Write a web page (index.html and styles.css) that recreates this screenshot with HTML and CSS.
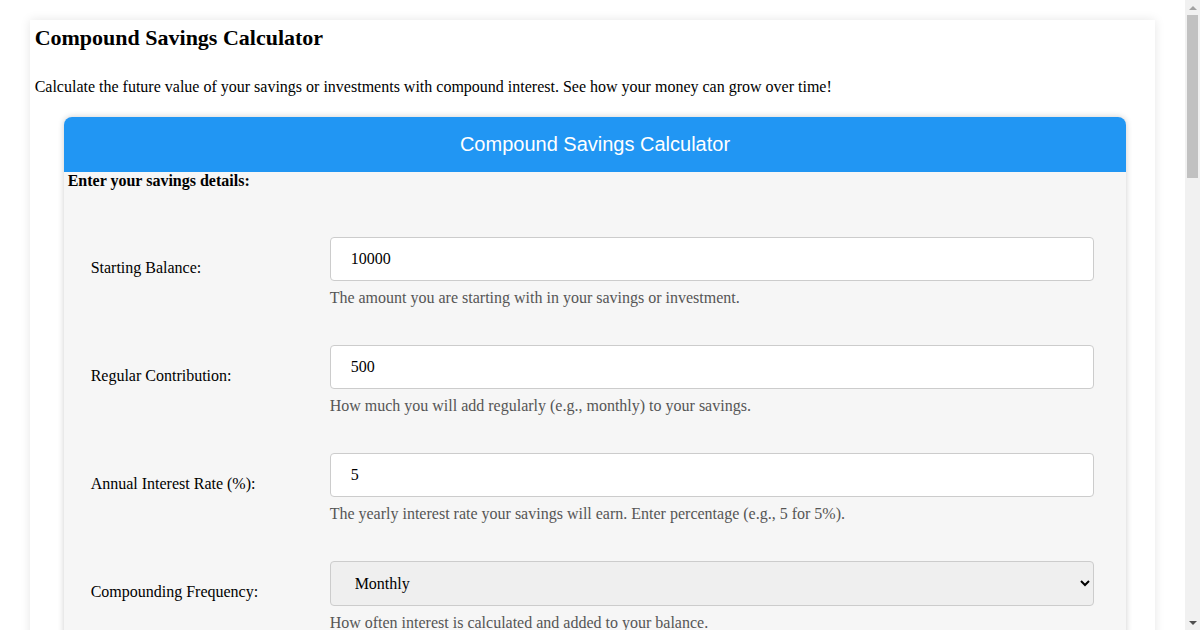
FILE: index.html
```html
<!DOCTYPE html>
<html lang="en">
<head>
<meta charset="utf-8">
<title>Compound Savings Calculator</title>
<link rel="stylesheet" href="styles.css">
</head>
<body>
<div class="viewport">
<div class="page">
  <h2 class="page-title">Compound Savings Calculator</h2>
  <p class="intro">Calculate the future value of your savings or investments with compound interest. See how your money can grow over time!</p>

  <div class="calc">
    <div class="calc-header">Compound Savings Calculator</div>
    <div class="calc-body">
      <div class="section-title">Enter your savings details:</div>

      <div class="fields">
        <div class="field">
          <label class="field-label" for="start">Starting Balance:</label>
          <div class="field-control">
            <input id="start" class="text-input" type="text" value="10000">
            <div class="help">The amount you are starting with in your savings or investment.</div>
          </div>
        </div>

        <div class="field">
          <label class="field-label" for="contrib">Regular Contribution:</label>
          <div class="field-control">
            <input id="contrib" class="text-input" type="text" value="500">
            <div class="help">How much you will add regularly (e.g., monthly) to your savings.</div>
          </div>
        </div>

        <div class="field">
          <label class="field-label" for="rate">Annual Interest Rate (%):</label>
          <div class="field-control">
            <input id="rate" class="text-input" type="text" value="5">
            <div class="help">The yearly interest rate your savings will earn. Enter percentage (e.g., 5 for 5%).</div>
          </div>
        </div>

        <div class="field">
          <label class="field-label" for="freq">Compounding Frequency:</label>
          <div class="field-control">
            <select id="freq" class="select-input">
              <option>Monthly</option>
              <option>Quarterly</option>
              <option>Annually</option>
              <option>Daily</option>
            </select>
            <div class="help">How often interest is calculated and added to your balance.</div>
          </div>
        </div>

        <div class="field">
          <label class="field-label" for="cfreq">Contribution Frequency:</label>
          <div class="field-control">
            <select id="cfreq" class="select-input">
              <option>Monthly</option>
              <option>Quarterly</option>
              <option>Annually</option>
            </select>
            <div class="help">How often you will make your regular contribution.</div>
          </div>
        </div>

        <div class="field">
          <label class="field-label" for="years">Number of Years:</label>
          <div class="field-control">
            <input id="years" class="text-input" type="text" value="10">
            <div class="help">How many years you plan to save or invest.</div>
          </div>
        </div>
      </div>

      <div class="actions">
        <button class="calc-btn" type="button">Calculate</button>
      </div>

      <div class="results">
        <div class="section-title">Results:</div>
        <div class="result-row"><span>Future Value:</span><strong>$94,111.19</strong></div>
        <div class="result-row"><span>Total Contributions:</span><strong>$70,000.00</strong></div>
        <div class="result-row"><span>Total Interest Earned:</span><strong>$24,111.19</strong></div>
      </div>

      <div class="results">
        <div class="section-title">Year-by-Year Breakdown:</div>
        <table class="breakdown">
          <thead><tr><th>Year</th><th>Contributions</th><th>Interest</th><th>Balance</th></tr></thead>
          <tbody>
            <tr><td>1</td><td>$16,000.00</td><td>$651.16</td><td>$16,651.16</td></tr>
            <tr><td>2</td><td>$22,000.00</td><td>$1,644.09</td><td>$23,644.09</td></tr>
            <tr><td>3</td><td>$28,000.00</td><td>$2,994.62</td><td>$30,994.62</td></tr>
            <tr><td>4</td><td>$34,000.00</td><td>$4,719.18</td><td>$38,719.18</td></tr>
            <tr><td>5</td><td>$40,000.00</td><td>$6,835.09</td><td>$46,835.09</td></tr>
            <tr><td>6</td><td>$46,000.00</td><td>$9,360.26</td><td>$55,360.26</td></tr>
            <tr><td>7</td><td>$52,000.00</td><td>$12,313.55</td><td>$64,313.55</td></tr>
            <tr><td>8</td><td>$58,000.00</td><td>$15,714.61</td><td>$73,714.61</td></tr>
            <tr><td>9</td><td>$64,000.00</td><td>$19,584.10</td><td>$83,584.10</td></tr>
            <tr><td>10</td><td>$70,000.00</td><td>$24,111.19</td><td>$94,111.19</td></tr>
          </tbody>
        </table>
      </div>
    </div>
  </div>

  <h3 class="sub-title">How Compound Interest Works</h3>
  <p class="info">Compound interest is interest calculated on the initial principal and also on the accumulated interest of previous periods. The more often interest is compounded, the faster your savings grow.</p>
  <p class="info">Regular contributions add to your principal, which in turn earns interest, helping your balance grow even faster over time.</p>

  <h3 class="sub-title">Tips for Growing Your Savings</h3>
  <ul class="tips">
    <li>Start saving as early as possible to give compound interest more time to work.</li>
    <li>Make regular contributions, even if they are small.</li>
    <li>Look for accounts with higher interest rates and more frequent compounding.</li>
    <li>Reinvest your interest earnings instead of withdrawing them.</li>
    <li>Review your savings plan regularly and increase contributions when you can.</li>
  </ul>

  <h3 class="sub-title">Frequently Asked Questions</h3>
  <p class="info"><strong>What is the difference between simple and compound interest?</strong><br>Simple interest is earned only on the principal, while compound interest is earned on both the principal and the interest already added.</p>
  <p class="info"><strong>Does compounding frequency matter?</strong><br>Yes. The more often interest is compounded, the more your savings will grow, although the difference becomes smaller at higher frequencies.</p>
  <p class="info"><strong>Are the results guaranteed?</strong><br>No. This calculator provides estimates only. Actual returns may vary depending on rates, fees and taxes.</p>
</div>
</div>
<div class="scrollbar" aria-hidden="true">
  <div class="sb-arrow sb-up"></div>
  <div class="sb-track"><div class="sb-thumb"></div></div>
  <div class="sb-arrow sb-down"></div>
</div>
</body>
</html>
```

FILE: styles.css
```css
html {
  height: 100%;
  overflow: hidden;
}

body {
  margin: 0;
  height: 100%;
  display: flex;
  overflow: hidden;
  font-family: "Liberation Serif", "Times New Roman", serif;
  font-size: 16px;
  color: #000;
  background: #fff;
}

.viewport {
  flex: 1;
  min-width: 0;
  overflow-y: auto;
  scrollbar-width: none;
}

.scrollbar {
  width: 15px;
  flex: none;
  display: flex;
  flex-direction: column;
  background: #f1f1f1;
}

.sb-arrow {
  height: 15px;
  flex: none;
  display: flex;
  align-items: center;
  justify-content: center;
}

.sb-up::before,
.sb-down::before {
  content: "";
  width: 0;
  height: 0;
  border-left: 4px solid transparent;
  border-right: 4px solid transparent;
}

.sb-up::before {
  border-bottom: 4px solid #a3a3a3;
}

.sb-down::before {
  border-top: 4px solid #505050;
}

.sb-track {
  flex: 1;
  padding: 0 2px;
}

.sb-thumb {
  height: 163px;
  background: #c1c1c1;
}

.page {
  width: 95%;
  margin: 20px auto;
  padding: 5px 5px 20px;
  box-sizing: border-box;
  background: #fff;
  box-shadow: 0 0 10px rgba(0, 0, 0, 0.1);
}

.page-title {
  font-size: 22px;
  margin: 0 0 27px;
}

.intro {
  margin: 0 0 21px;
}

.calc {
  margin: 0 24px 0 29px;
  background: #f6f6f6;
  border-radius: 8px;
  box-shadow: 0 0 6px rgba(0, 0, 0, 0.2);
  overflow: hidden;
}

.calc-header {
  background: #2196f3;
  color: #fff;
  font-family: "Liberation Sans", Arial, sans-serif;
  font-size: 20px;
  text-align: center;
  padding: 16px 0 16px;
}

.calc-body {
  padding: 0 4px 30px;
}

.section-title {
  font-weight: bold;
  line-height: 18px;
}

.fields {
  display: flex;
  flex-direction: column;
  gap: 38px;
  padding: 47px 28px 0 23px;
}

.field {
  display: grid;
  grid-template-columns: 239px 1fr;
}

.field-label {
  align-self: start;
  padding-top: 22px;
  line-height: 18px;
}

.field-control {
  display: flex;
  flex-direction: column;
}

.text-input,
.select-input {
  height: 44px;
  box-sizing: border-box;
  border: 1px solid #ccc;
  border-radius: 4px;
  font-family: "Liberation Serif", "Times New Roman", serif;
  font-size: 16px;
  color: #000;
  padding: 0 20px;
}

.text-input {
  background: #fff;
}

.select-input {
  height: 45px;
  background-color: #efefef;
  padding-left: 20px;
}

.help {
  margin-top: 8px;
  line-height: 18px;
  color: #555;
}

.actions {
  padding: 40px 0 0 266px;
}

.calc-btn {
  background: #2196f3;
  color: #fff;
  border: none;
  border-radius: 4px;
  padding: 12px 28px;
  font-family: "Liberation Sans", Arial, sans-serif;
  font-size: 16px;
}

.results {
  margin: 40px 28px 0 23px;
  padding: 16px;
  background: #fff;
  border: 1px solid #ddd;
  border-radius: 4px;
}

.result-row {
  display: flex;
  justify-content: space-between;
  padding: 10px 0;
  border-bottom: 1px solid #eee;
}

.breakdown {
  width: 100%;
  border-collapse: collapse;
  margin-top: 12px;
}

.breakdown th,
.breakdown td {
  border: 1px solid #ddd;
  padding: 10px;
  text-align: right;
}

.breakdown th {
  background: #eee;
}

.sub-title {
  font-size: 19px;
  margin: 30px 0 10px;
}

.info {
  margin: 0 0 16px;
  line-height: 24px;
}

.tips {
  margin: 0 0 16px;
  padding-left: 30px;
  line-height: 28px;
}
```
